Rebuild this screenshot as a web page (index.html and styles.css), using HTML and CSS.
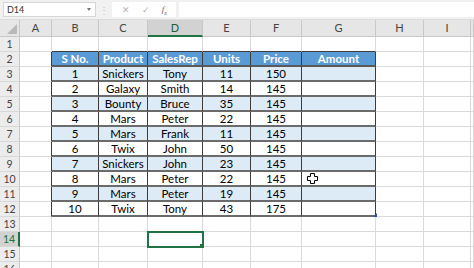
FILE: index.html
```html
<!DOCTYPE html>
<html lang="en">
<head>
    <meta charset="UTF-8">
    <title>Sales sheet</title>
    <link rel="stylesheet" href="styles.css">
</head>
<body>
    <div class="formula-bar">
        <div class="name-box">
            <span>D14</span>
            <span class="drop"></span>
        </div>
        <div class="grip">&#8942;</div>
        <div class="fx-buttons">
            <span>&#10005;</span>
            <span>&#10003;</span>
            <span class="fx">f<sub>x</sub></span>
        </div>
        <div class="formula-input"></div>
    </div>

    <div class="sheet">
        <div class="row head">
            <div class="corner"></div>
            <div>A</div><div>B</div><div>C</div><div class="active-col">D</div><div>E</div><div>F</div><div>G</div><div>H</div><div>I</div><div></div>
        </div>
        <div class="row">
            <div class="rh">1</div>
            <div></div><div class="tt"></div><div class="tt"></div><div class="tt"></div><div class="tt"></div><div class="tt"></div><div class="tt"></div><div></div><div></div><div></div>
        </div>
        <div class="row">
            <div class="rh">2</div>
            <div class="tl"></div><div class="th">S No.</div><div class="th">Product</div><div class="th">SalesRep</div><div class="th">Units</div><div class="th">Price</div><div class="th">Amount</div><div></div><div></div><div></div>
        </div>
        <div class="row">
            <div class="rh">3</div>
            <div class="tl"></div><div class="t band">1</div><div class="t band">Snickers</div><div class="t band">Tony</div><div class="t band">11</div><div class="t band">150</div><div class="t band"></div><div></div><div></div><div></div>
        </div>
        <div class="row">
            <div class="rh">4</div>
            <div class="tl"></div><div class="t">2</div><div class="t">Galaxy</div><div class="t">Smith</div><div class="t">14</div><div class="t">145</div><div class="t"></div><div></div><div></div><div></div>
        </div>
        <div class="row">
            <div class="rh">5</div>
            <div class="tl"></div><div class="t band">3</div><div class="t band">Bounty</div><div class="t band">Bruce</div><div class="t band">35</div><div class="t band">145</div><div class="t band"></div><div></div><div></div><div></div>
        </div>
        <div class="row">
            <div class="rh">6</div>
            <div class="tl"></div><div class="t">4</div><div class="t">Mars</div><div class="t">Peter</div><div class="t">22</div><div class="t">145</div><div class="t"></div><div></div><div></div><div></div>
        </div>
        <div class="row">
            <div class="rh">7</div>
            <div class="tl"></div><div class="t band">5</div><div class="t band">Mars</div><div class="t band">Frank</div><div class="t band">11</div><div class="t band">145</div><div class="t band"></div><div></div><div></div><div></div>
        </div>
        <div class="row">
            <div class="rh">8</div>
            <div class="tl"></div><div class="t">6</div><div class="t">Twix</div><div class="t">John</div><div class="t">50</div><div class="t">145</div><div class="t"></div><div></div><div></div><div></div>
        </div>
        <div class="row">
            <div class="rh">9</div>
            <div class="tl"></div><div class="t band">7</div><div class="t band">Snickers</div><div class="t band">John</div><div class="t band">23</div><div class="t band">145</div><div class="t band"></div><div></div><div></div><div></div>
        </div>
        <div class="row">
            <div class="rh">10</div>
            <div class="tl"></div><div class="t">8</div><div class="t">Mars</div><div class="t">Peter</div><div class="t">22</div><div class="t">145</div><div class="t cursor-cell"><svg class="cursor" width="11" height="11" viewBox="0 0 11 11"><path d="M3.5 0.5h4v3h3v4h-3v3h-4v-3h-3v-4h3z" fill="#fff" stroke="#000" stroke-width="1"/></svg></div><div></div><div></div><div></div>
        </div>
        <div class="row">
            <div class="rh">11</div>
            <div class="tl"></div><div class="t band">9</div><div class="t band">Mars</div><div class="t band">Peter</div><div class="t band">19</div><div class="t band">145</div><div class="t band"></div><div></div><div></div><div></div>
        </div>
        <div class="row">
            <div class="rh">12</div>
            <div class="tl"></div><div class="t">10</div><div class="t">Twix</div><div class="t">Tony</div><div class="t">43</div><div class="t">175</div><div class="t resize"></div><div></div><div></div><div></div>
        </div>
        <div class="row">
            <div class="rh">13</div>
            <div></div><div></div><div></div><div></div><div></div><div></div><div></div><div></div><div></div><div></div>
        </div>
        <div class="row">
            <div class="rh active-row">14</div>
            <div></div><div></div><div></div><div class="selected"></div><div></div><div></div><div></div><div></div><div></div><div></div>
        </div>
        <div class="row">
            <div class="rh">15</div>
            <div></div><div></div><div></div><div></div><div></div><div></div><div></div><div></div><div></div><div></div>
        </div>
        <div class="row">
            <div class="rh">16</div>
            <div></div><div></div><div></div><div></div><div></div><div></div><div></div><div></div><div></div><div></div>
        </div>
    </div>
</body>
</html>
```

FILE: styles.css
```css
body {
    margin: 0;
    width: 474px;
    height: 268px;
    overflow: hidden;
    background: #fff;
    font-family: 'Lato', 'Liberation Sans', sans-serif;
    color: #000;
}

.formula-bar {
    display: flex;
    align-items: center;
    height: 20px;
    background: #f1f1f1;
    border-bottom: 1px solid #dcdcdc;
    box-sizing: border-box;
}

.name-box {
    display: flex;
    align-items: center;
    justify-content: space-between;
    width: 93px;
    height: 15px;
    margin-left: 3px;
    padding: 0 4px 0 3px;
    box-sizing: border-box;
    background: #fff;
    border: 1px solid #d6d6d6;
    font-size: 9px;
    color: #333;
}

.drop {
    width: 0;
    height: 0;
    border-left: 2px solid transparent;
    border-right: 2px solid transparent;
    border-top: 3px solid #777;
}

.grip {
    width: 16px;
    text-align: center;
    font-size: 10px;
    color: #c4c4c4;
}

.fx-buttons {
    display: flex;
    align-items: center;
    justify-content: space-between;
    width: 64px;
    height: 15px;
    padding: 0 9px 0 10px;
    box-sizing: border-box;
    background: #fff;
    font-size: 9px;
    color: #b3b3b3;
}

.fx {
    font-family: 'Liberation Serif', serif;
    font-style: italic;
    color: #666;
}

.fx sub {
    font-size: 6px;
}

.formula-input {
    flex: 1;
    height: 15px;
    margin-left: 3px;
    background: #fff;
}

.sheet {
    background: #fff;
}

.row {
    display: grid;
    grid-template-columns: 20px 32px 47px 49px 55px 48px 51px 74px 48px 47px 1fr;
    height: 15px;
}

.row > div {
    box-sizing: border-box;
    border-right: 1px solid #dadada;
    border-bottom: 1px solid #dadada;
    font-size: 11.5px;
    line-height: 14px;
    text-align: center;
    white-space: nowrap;
    overflow: hidden;
}

.row.head {
    height: 17px;
}

.row.head > div {
    background: #e6e6e6;
    border-right-color: #c8c8c8;
    border-bottom-color: #c8c8c8;
    line-height: 16px;
    font-size: 11px;
    color: #444;
}

.row.head > .corner {
    position: relative;
}

.corner::after {
    content: "";
    position: absolute;
    right: 2px;
    bottom: 2px;
    border-left: 10px solid transparent;
    border-bottom: 10px solid #b9b9b9;
}

.row.head > .active-col {
    background: #d2d2d2;
    border-bottom: 2px solid #217346;
    color: #1e5b38;
}

.row > .rh {
    background: #ececec;
    border-right-color: #c8c8c8;
    border-bottom-color: #d8d8d8;
    font-size: 10.5px;
    color: #444;
}

.row > .active-row {
    background: #d2d2d2;
    border-right: 2px solid #217346;
    color: #217346;
}

.row > .tl {
    border-right-color: #3c3c3c;
}

.row > .tt {
    border-bottom-color: #3c3c3c;
}

.row > .th {
    background: #5b9bd5;
    color: #fff;
    font-weight: bold;
    border-right-color: #3c3c3c;
    border-bottom: 2px solid #5a5a5a;
}

.row > .t {
    border-right-color: #3c3c3c;
    border-bottom: 2px solid #6b6b6b;
    line-height: 13px;
}

.row > .band {
    background: #ddebf7;
}

.row > .selected {
    position: relative;
    outline: 2px solid #217346;
    outline-offset: -1px;
}

.selected::after {
    content: "";
    position: absolute;
    right: -3px;
    bottom: -3px;
    width: 4px;
    height: 4px;
    background: #217346;
    border: 1px solid #fff;
}

.row > .cursor-cell {
    position: relative;
    overflow: visible;
}

.cursor {
    position: absolute;
    left: 5px;
    top: 1px;
}

.row > .resize {
    position: relative;
    overflow: visible;
}

.resize::after {
    content: "";
    position: absolute;
    right: -2px;
    bottom: -2px;
    border-left: 4px solid transparent;
    border-bottom: 4px solid #2f5597;
}
```
